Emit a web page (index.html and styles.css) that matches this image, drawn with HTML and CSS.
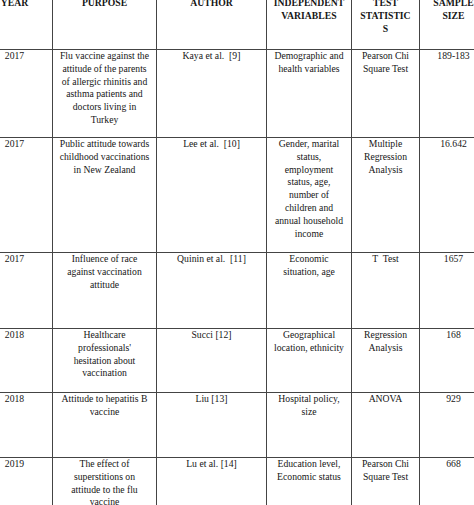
FILE: index.html
```html
<!DOCTYPE html>
<html lang="en">
<head>
<meta charset="utf-8">
<title>Vaccination attitude studies</title>
<link rel="stylesheet" href="styles.css">
</head>
<body>
<table class="studies">
  <colgroup>
    <col class="c-year">
    <col class="c-purpose">
    <col class="c-author">
    <col class="c-vars">
    <col class="c-test">
    <col class="c-size">
  </colgroup>
  <thead>
    <tr class="r-head">
      <th>YEAR</th>
      <th>PURPOSE</th>
      <th>AUTHOR</th>
      <th>INDEPENDENT<br>VARIABLES</th>
      <th>TEST<br>STATISTIC<br>S</th>
      <th>SAMPLE<br>SIZE</th>
    </tr>
  </thead>
  <tbody>
    <tr class="r1">
      <td>2017</td>
      <td>Flu vaccine against the<br>attitude of the parents<br>of allergic rhinitis and<br>asthma patients and<br>doctors living in<br>Turkey</td>
      <td>Kaya et al.&nbsp; [9]</td>
      <td>Demographic and<br>health variables</td>
      <td>Pearson Chi<br>Square Test</td>
      <td>189-183</td>
    </tr>
    <tr class="r2">
      <td>2017</td>
      <td>Public attitude towards<br>childhood vaccinations<br>in New Zealand</td>
      <td>Lee et al.&nbsp; [10]</td>
      <td>Gender, marital<br>status,<br>employment<br>status, age,<br>number of<br>children and<br>annual household<br>income</td>
      <td>Multiple<br>Regression<br>Analysis</td>
      <td>16.642</td>
    </tr>
    <tr class="r3">
      <td>2017</td>
      <td>Influence of race<br>against vaccination<br>attitude</td>
      <td>Quinin et al.&nbsp; [11]</td>
      <td>Economic<br>situation, age</td>
      <td>T&nbsp; Test</td>
      <td>1657</td>
    </tr>
    <tr class="r4">
      <td>2018</td>
      <td>Healthcare<br>professionals'<br>hesitation about<br>vaccination</td>
      <td>Succi [12]</td>
      <td>Geographical<br>location, ethnicity</td>
      <td>Regression<br>Analysis</td>
      <td>168</td>
    </tr>
    <tr class="r5">
      <td>2018</td>
      <td>Attitude to hepatitis B<br>vaccine</td>
      <td>Liu [13]</td>
      <td>Hospital policy,<br>size</td>
      <td>ANOVA</td>
      <td>929</td>
    </tr>
    <tr class="r6">
      <td>2019</td>
      <td>The effect of<br>superstitions on<br>attitude to the flu<br>vaccine</td>
      <td>Lu et al. [14]</td>
      <td>Education level,<br>Economic status</td>
      <td>Pearson Chi<br>Square Test</td>
      <td>668</td>
    </tr>
  </tbody>
</table>
</body>
</html>
```

FILE: styles.css
```css
html, body {
  margin: 0;
  padding: 0;
  background: #ffffff;
  overflow: hidden;
}

body {
  font-family: "Liberation Serif", "Times New Roman", serif;
  color: #161616;
}

.studies {
  border-collapse: collapse;
  table-layout: fixed;
  width: 511px;
  margin: -4px 0 0 -24px;
  font-size: 9.7px;
  line-height: 12.8px;
}

.c-year { width: 76px; }
.c-purpose { width: 104px; }
.c-author { width: 110px; }
.c-vars { width: 85px; }
.c-test { width: 68px; }
.c-size { width: 68px; }

.studies th,
.studies td {
  border: 1px solid #444444;
  padding: 0 2px;
  vertical-align: top;
  text-align: center;
  white-space: nowrap;
  overflow: hidden;
}

.studies th {
  font-weight: bold;
  padding-top: 0;
}

.r-head { height: 53px; }
.r1 { height: 88px; }
.r2 { height: 115px; }
.r3 { height: 76px; }
.r4 { height: 64px; }
.r5 { height: 65px; }
.r6 { height: 70px; }
```
